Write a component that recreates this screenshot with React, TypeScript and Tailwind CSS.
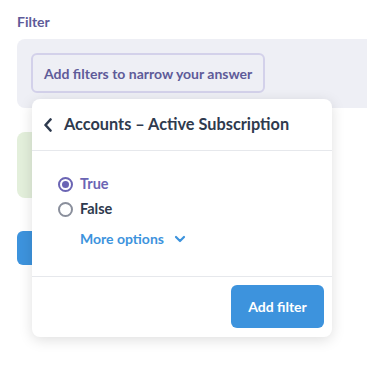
import React from "react";

export default function App() {
  return (
    <div className="relative w-[367px] h-[369px] bg-white overflow-hidden" style={{ fontFamily: "Lato, 'Open Sans', sans-serif" }}>
      <div className="pl-[17px] pt-[13px]">
        <div className="text-[14px] font-bold text-[#5e5b99] leading-[18px]">Filter</div>
        <div className="mt-[8px] h-[69px] bg-[#eeeff5] rounded-l-[8px] pl-[14px] pt-[14px]">
          <div className="inline-flex items-center h-[40px] px-[11px] border-2 border-[#d3d1ea] rounded-[6px] text-[14px] font-bold text-[#5e5b99]">
            Add filters to narrow your answer
          </div>
        </div>
        <div className="mt-[24px] w-[200px] h-[66px] bg-[#e3efdb] rounded-[8px]" />
        <div className="mt-[33px] w-[200px] h-[34px] bg-[#3d93dd] rounded-[6px]" />
      </div>

      <div className="absolute left-[32px] top-[99px] w-[300px] h-[238px] bg-white rounded-[8px] shadow-[0_3px_14px_rgba(0,0,0,0.13)] flex flex-col">
        <div className="h-[52px] flex items-center pl-[11px] border-b border-[#e6e8ec]">
          <svg width="10" height="14" viewBox="0 0 10 14" className="mr-[11px]">
            <path d="M7.5 1.5 L2.5 7 L7.5 12.5" fill="none" stroke="#2e3a4e" strokeWidth="2.6" strokeLinecap="round" strokeLinejoin="round" />
          </svg>
          <span className="text-[16.3px] font-bold text-[#2e3a4e]">Accounts – Active Subscription</span>
        </div>
        <div className="h-[126px] border-b border-[#e6e8ec] pl-[26px] pt-[23px]">
          <div className="flex items-center h-[20px]">
            <span className="w-[15px] h-[15px] rounded-full border-2 border-[#6b65b4] flex items-center justify-center">
              <span className="w-[7px] h-[7px] rounded-full bg-[#6b65b4]" />
            </span>
            <span className="ml-[7px] text-[14.5px] font-bold text-[#6b65b4]">True</span>
          </div>
          <div className="flex items-center h-[20px] mt-[5px]">
            <span className="w-[15px] h-[15px] rounded-full border-2 border-[#8a8f9c]" />
            <span className="ml-[7px] text-[14.5px] font-bold text-[#2e3a4e]">False</span>
          </div>
          <div className="flex items-center h-[20px] mt-[9px] pl-[22px]">
            <span className="text-[14px] font-bold text-[#3d93dd]">More options</span>
            <svg width="12" height="8" viewBox="0 0 12 8" className="ml-[10px] mt-[2px]">
              <path d="M2 2 L6 6 L10 2" fill="none" stroke="#3d93dd" strokeWidth="2.2" strokeLinecap="round" strokeLinejoin="round" />
            </svg>
          </div>
        </div>
        <div className="flex-1 flex justify-end items-start pt-[8px] pr-[8px]">
          <div className="w-[93px] h-[43px] bg-[#3d93dd] rounded-[6px] flex items-center justify-center text-white text-[14px] font-bold">
            Add filter
          </div>
        </div>
      </div>
    </div>
  );
}
